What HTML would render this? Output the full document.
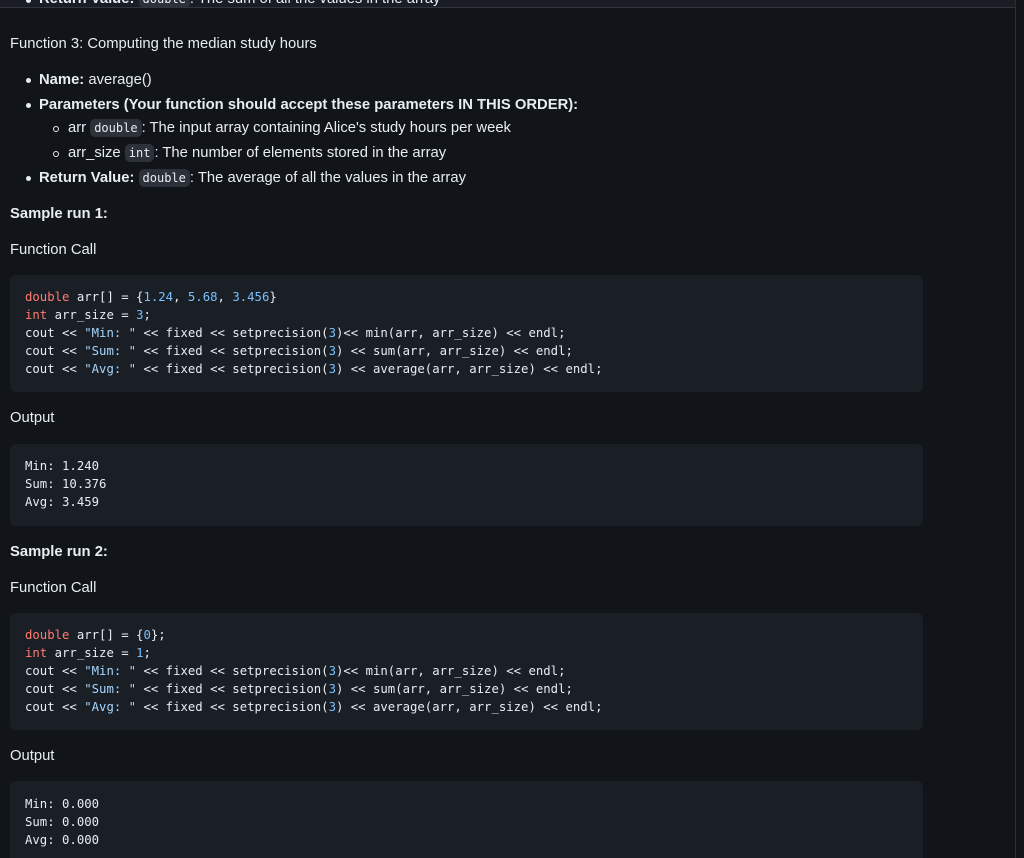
<!DOCTYPE html>
<html style="overflow:hidden;height:858px"><head><meta charset="utf-8"><style>
body{margin:0;width:1024px;height:858px;overflow:hidden;background:#111419;color:#e6edf3;font-family:"Liberation Sans",sans-serif;font-size:14.8px;position:relative}
.a{position:absolute;white-space:nowrap}
.top{position:absolute;left:0;top:0;width:1015px;height:7px;background:transparent;border-bottom:1px solid #30343b}
.sb{position:absolute;left:1015px;top:0;width:9px;height:858px;background:#111419;border-left:1px solid #2a2e35}
.blk{position:absolute;left:10px;width:913px;background:#1a1e25;border-radius:6px}
.code{position:absolute;left:25px;font-family:"DejaVu Sans Mono","Liberation Mono",monospace;font-size:12.3px;line-height:18px;white-space:pre;color:#e6edf3}
.k{color:#ff7b72}.n{color:#79c0ff}.s{color:#a5d6ff}
code{font-family:"DejaVu Sans Mono",monospace;font-size:12px;background:#2d323a;border-radius:5px;padding:2px 4px}
b{font-weight:bold}
.dot{position:absolute;width:5px;height:5px;border-radius:50%;background:#e6edf3}
.circ{position:absolute;width:4px;height:4px;border-radius:50%;border:1px solid #e6edf3}
</style></head><body>
<div style="position:absolute;left:0;top:0;width:1015px;height:7px;overflow:hidden;background:#1a1d24">
<div class="a" style="left:39px;top:-9px"><b>Return Value:</b> <code>double</code>: The sum of all the values in the array</div>
<div class="dot" style="left:26px;top:-2px"></div>
</div>
<div class="top"></div><div class="sb"></div>
<div class="a" style="left:10px;top:36px">Function 3: Computing the median study hours</div>
<div class="dot" style="left:26px;top:78px"></div>
<div class="a" style="left:39px;top:72px"><b>Name:</b> average()</div>
<div class="dot" style="left:26px;top:103px"></div>
<div class="a" style="left:39px;top:97px"><b>Parameters (Your function should accept these parameters IN THIS ORDER):</b></div>
<div class="circ" style="left:53px;top:126px"></div>
<div class="a" style="left:68px;top:120px">arr <code>double</code>: The input array containing Alice's study hours per week</div>
<div class="circ" style="left:53px;top:151px"></div>
<div class="a" style="left:68px;top:145px">arr_size <code>int</code>: The number of elements stored in the array</div>
<div class="dot" style="left:26px;top:176px"></div>
<div class="a" style="left:39px;top:170px"><b>Return Value:</b> <code>double</code>: The average of all the values in the array</div>
<div class="a" style="left:10px;top:206px"><b>Sample run 1:</b></div>
<div class="a" style="left:10px;top:242px">Function Call</div>
<div class="blk" style="top:275px;height:117px"></div>
<div class="code" style="top:288px"><span class="k">double</span> arr[] = {<span class="n">1.24</span>, <span class="n">5.68</span>, <span class="n">3.456</span>}
<span class="k">int</span> arr_size = <span class="n">3</span>;
cout &lt;&lt; <span class="s">"Min: "</span> &lt;&lt; fixed &lt;&lt; setprecision(<span class="n">3</span>)&lt;&lt; min(arr, arr_size) &lt;&lt; endl;
cout &lt;&lt; <span class="s">"Sum: "</span> &lt;&lt; fixed &lt;&lt; setprecision(<span class="n">3</span>) &lt;&lt; sum(arr, arr_size) &lt;&lt; endl;
cout &lt;&lt; <span class="s">"Avg: "</span> &lt;&lt; fixed &lt;&lt; setprecision(<span class="n">3</span>) &lt;&lt; average(arr, arr_size) &lt;&lt; endl;</div>
<div class="a" style="left:10px;top:410px">Output</div>
<div class="blk" style="top:444px;height:82px"></div>
<div class="code" style="top:457px">Min: 1.240
Sum: 10.376
Avg: 3.459</div>
<div class="a" style="left:10px;top:544px"><b>Sample run 2:</b></div>
<div class="a" style="left:10px;top:580px">Function Call</div>
<div class="blk" style="top:613px;height:117px"></div>
<div class="code" style="top:626px"><span class="k">double</span> arr[] = {<span class="n">0</span>};
<span class="k">int</span> arr_size = <span class="n">1</span>;
cout &lt;&lt; <span class="s">"Min: "</span> &lt;&lt; fixed &lt;&lt; setprecision(<span class="n">3</span>)&lt;&lt; min(arr, arr_size) &lt;&lt; endl;
cout &lt;&lt; <span class="s">"Sum: "</span> &lt;&lt; fixed &lt;&lt; setprecision(<span class="n">3</span>) &lt;&lt; sum(arr, arr_size) &lt;&lt; endl;
cout &lt;&lt; <span class="s">"Avg: "</span> &lt;&lt; fixed &lt;&lt; setprecision(<span class="n">3</span>) &lt;&lt; average(arr, arr_size) &lt;&lt; endl;</div>
<div class="a" style="left:10px;top:748px">Output</div>
<div class="blk" style="top:781px;height:77px;border-radius:6px 6px 0 0"></div>
<div class="code" style="top:795px">Min: 0.000
Sum: 0.000
Avg: 0.000</div>
</body></html>
